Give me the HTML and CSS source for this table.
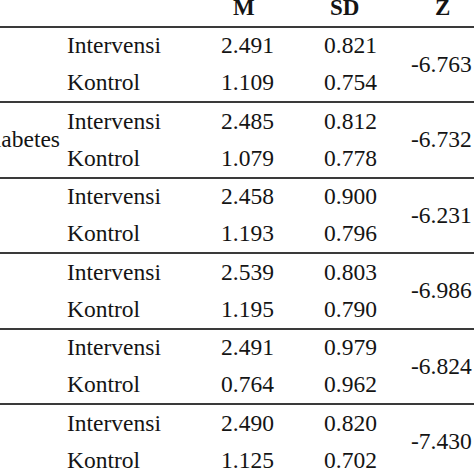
FILE: index.html
```html
<!DOCTYPE html>
<html>
<head>
<meta charset="utf-8">
<title>Tabel</title>
<link rel="stylesheet" href="styles.css">
</head>
<body>
<div class="tbl">
  <div class="row head">
    <div></div>
    <div></div>
    <div class="h-m">M</div>
    <div class="h-sd">SD</div>
    <div class="h-z">Z</div>
  </div>

  <div class="group">
    <div class="lab"></div>
    <div class="grp">Intervensi</div><div class="num">2.491</div><div class="num sd">0.821</div>
    <div class="z">-6.763</div>
    <div class="grp">Kontrol</div><div class="num">1.109</div><div class="num sd">0.754</div>
  </div>

  <div class="group">
    <div class="lab"><span>Diabetes</span></div>
    <div class="grp">Intervensi</div><div class="num">2.485</div><div class="num sd">0.812</div>
    <div class="z">-6.732</div>
    <div class="grp">Kontrol</div><div class="num">1.079</div><div class="num sd">0.778</div>
  </div>

  <div class="group">
    <div class="lab"></div>
    <div class="grp">Intervensi</div><div class="num">2.458</div><div class="num sd">0.900</div>
    <div class="z">-6.231</div>
    <div class="grp">Kontrol</div><div class="num">1.193</div><div class="num sd">0.796</div>
  </div>

  <div class="group">
    <div class="lab"></div>
    <div class="grp">Intervensi</div><div class="num">2.539</div><div class="num sd">0.803</div>
    <div class="z">-6.986</div>
    <div class="grp">Kontrol</div><div class="num">1.195</div><div class="num sd">0.790</div>
  </div>

  <div class="group">
    <div class="lab"></div>
    <div class="grp">Intervensi</div><div class="num">2.491</div><div class="num sd">0.979</div>
    <div class="z">-6.824</div>
    <div class="grp">Kontrol</div><div class="num">0.764</div><div class="num sd">0.962</div>
  </div>

  <div class="group">
    <div class="lab"></div>
    <div class="grp">Intervensi</div><div class="num">2.490</div><div class="num sd">0.820</div>
    <div class="z">-7.430</div>
    <div class="grp">Kontrol</div><div class="num">1.125</div><div class="num sd">0.702</div>
  </div>
</div>
</body>
</html>
```

FILE: styles.css
```css
html, body {
  margin: 0;
  padding: 0;
  background: #ffffff;
  overflow: hidden;
}

body {
  font-family: "Liberation Serif", serif;
  font-size: 23px;
  color: #141414;
}

.tbl {
  width: 520px;
  font-family: "Liberation Serif", serif;
}

.tbl div {
  font-family: "Liberation Serif", serif;
}

.row,
.group {
  display: grid;
  grid-template-columns: 64px 157px 103px 87px 1fr;
  border-bottom: 2px solid #3a3a3a;
}

.head {
  height: 25.5px;
  line-height: 16px;
  align-items: start;
  font-weight: bold;
}

.h-m { padding-left: 12px; }
.h-sd { padding-left: 6px; }
.h-z { padding-left: 24px; }

.group {
  grid-template-rows: 36.75px 36.75px;
  align-items: center;
  font-size: 23.5px;
}

.lab {
  grid-row: 1 / span 2;
  grid-column: 1;
  display: flex;
  justify-content: flex-end;
  padding-right: 4px;
  white-space: nowrap;
  min-width: 0;
}

.grp {
  padding-left: 3px;
  white-space: nowrap;
}

.num {
  white-space: nowrap;
}

.z {
  grid-row: 1 / span 2;
  grid-column: 5;
  white-space: nowrap;
}
```
